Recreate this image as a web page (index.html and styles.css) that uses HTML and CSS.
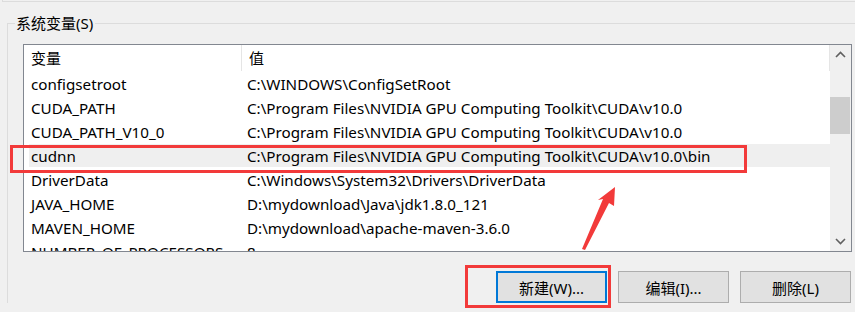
FILE: index.html
```html
<!DOCTYPE html>
<html lang="zh-CN">

<head>
    <meta charset="UTF-8" />
    <title>系统变量</title>
    <link rel="stylesheet" href="styles.css">
</head>

<body>
    <div class="prev-group"></div>

    <div class="group">
        <div class="group-title">系统变量(S)</div>

        <div class="listbox">
            <div class="list">
                <div class="list-head">
                    <div class="col-name">变量</div>
                    <div class="col-value">值</div>
                </div>
                <div class="list-body">
                    <div class="row"><div class="col-name">configsetroot</div><div class="col-value">C:\WINDOWS\ConfigSetRoot</div></div>
                    <div class="row"><div class="col-name">CUDA_PATH</div><div class="col-value">C:\Program Files\NVIDIA GPU Computing Toolkit\CUDA\v10.0</div></div>
                    <div class="row"><div class="col-name">CUDA_PATH_V10_0</div><div class="col-value">C:\Program Files\NVIDIA GPU Computing Toolkit\CUDA\v10.0</div></div>
                    <div class="row selected"><div class="col-name">cudnn</div><div class="col-value">C:\Program Files\NVIDIA GPU Computing Toolkit\CUDA\v10.0\bin</div></div>
                    <div class="row"><div class="col-name">DriverData</div><div class="col-value">C:\Windows\System32\Drivers\DriverData</div></div>
                    <div class="row"><div class="col-name">JAVA_HOME</div><div class="col-value">D:\mydownload\Java\jdk1.8.0_121</div></div>
                    <div class="row"><div class="col-name">MAVEN_HOME</div><div class="col-value">D:\mydownload\apache-maven-3.6.0</div></div>
                    <div class="row"><div class="col-name">NUMBER_OF_PROCESSORS</div><div class="col-value">8</div></div>
                </div>
            </div>
            <div class="scrollbar">
                <svg class="arrow-btn" width="21" height="20" viewBox="0 0 21 20"><path d="M6 12 L10.5 7.5 L15 12" fill="none" stroke="#606060" stroke-width="1.6"/></svg>
                <div class="track">
                    <div class="thumb"></div>
                </div>
                <svg class="arrow-btn" width="21" height="20" viewBox="0 0 21 20"><path d="M6 8 L10.5 12.5 L15 8" fill="none" stroke="#606060" stroke-width="1.6"/></svg>
            </div>
        </div>

        <div class="buttons">
            <button type="button" class="btn default">新建(W)...</button>
            <button type="button" class="btn">编辑(I)...</button>
            <button type="button" class="btn">删除(L)</button>
        </div>
    </div>

    <!-- annotations drawn over the dialog -->
    <div class="mark mark-row"></div>
    <div class="mark mark-btn"></div>
    <svg class="mark-arrow" width="855" height="312" viewBox="0 0 855 312">
        <polygon points="615,187 614,206 609,203 585,250 582,249 603,199 598,200" fill="#f23a3a"/>
    </svg>
</body>

</html>
```

FILE: styles.css
```css
body {
    margin: 0;
    background: #f0f0f0;
    font-family: "Noto Sans", "Noto Sans CJK SC", sans-serif;
    font-size: 15px;
    color: #000;
    width: 855px;
    height: 312px;
    overflow: hidden;
    position: relative;
}

.prev-group {
    height: 1px;
    margin-left: 2px;
    border-left: 1px solid #dcdcdc;
    border-bottom: 1px solid #dcdcdc;
}

.group {
    margin: 21px 0 0 7px;
    border-top: 1px solid #dcdcdc;
    border-left: 1px solid #dcdcdc;
    padding-left: 15px;
}

.group-title {
    display: inline-block;
    margin: -11px 0 0 -8px;
    padding: 0 2px 0 1px;
    background: #f0f0f0;
    line-height: 20px;
    vertical-align: top;
}

.listbox {
    display: flex;
    width: 827px;
    height: 206px;
    border: 1px solid #828790;
    background: #fff;
}

.list {
    flex: 1;
    overflow: hidden;
}

.list-head {
    display: flex;
    height: 26px;
    line-height: 26px;
    border-right: 1px solid #e5e5e5;
}

.list-head .col-name {
    border-right: 1px solid #e5e5e5;
}

.col-name {
    width: 210px;
    padding-left: 7px;
    white-space: nowrap;
    flex-shrink: 0;
}

.col-value {
    padding-left: 7px;
    white-space: nowrap;
}

.list-body {
    padding-top: 1px;
}

.row {
    display: flex;
    height: 24px;
    line-height: 24px;
    margin-left: 5px;
    font-size: 15.2px;
}

.row .col-name {
    width: 205px;
    padding-left: 2px;
}

.row .col-value {
    padding-left: 11px;
}

.row.selected {
    background: #efefef;
    height: 23px;
    margin-bottom: 1px;
}

.scrollbar {
    width: 21px;
    display: flex;
    flex-direction: column;
    background: #f0f0f0;
}

.arrow-btn {
    display: block;
    flex-shrink: 0;
}

.track {
    flex: 1;
    padding-top: 32px;
}

.thumb {
    height: 37px;
    margin-right: 1px;
    background: #cdcdcd;
}

.buttons {
    display: flex;
    justify-content: flex-end;
    gap: 11px;
    width: 828px;
    margin-top: 19px;
}

.btn {
    width: 111px;
    height: 32px;
    background: #e1e1e1;
    border: 1px solid #adadad;
    font-family: inherit;
    font-size: 15px;
    color: #000;
    padding: 0;
}

.btn.default {
    border: 2px solid #0078d7;
}

.mark {
    position: absolute;
    border: 3px solid #f23a3a;
    box-sizing: border-box;
}

.mark-row {
    left: 10px;
    top: 145px;
    width: 737px;
    height: 28px;
}

.mark-btn {
    left: 465px;
    top: 265px;
    width: 146px;
    height: 43px;
}

.mark-arrow {
    position: absolute;
    left: 0;
    top: 0;
}
```
